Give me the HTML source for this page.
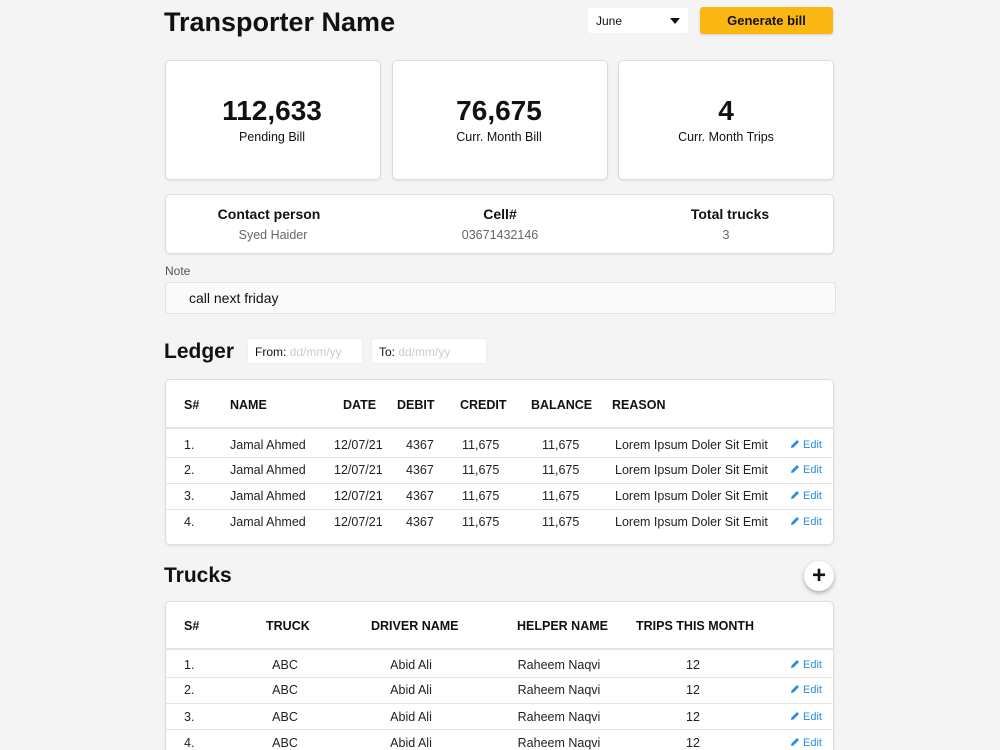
<!DOCTYPE html>
<html><head><meta charset="utf-8"><style>
*{margin:0;padding:0;box-sizing:border-box}
html{width:1000px;height:750px;overflow:hidden}
body{width:1000px;height:750px;background:#f4f4f4;font-family:"Liberation Sans",Arial,sans-serif;color:#111;position:relative;overflow:hidden}
.a{position:absolute;white-space:nowrap}
.box{position:absolute;background:#fff;border:1px solid #ddd;border-radius:5px;box-shadow:0 1px 2px rgba(0,0,0,.08)}
.c{transform:translateX(-50%)}
.h{font-size:12.5px;font-weight:bold;color:#111}
.d{font-size:12.5px;color:#222}
.line{position:absolute;left:165px;width:669px;height:1px;background:#e4e4e4}
.ed{font-size:11px;color:#2a8ee0}
.ed svg{vertical-align:-1px;margin-right:3px}
</style></head><body>
<div class="a" style="left:164px;top:7px;font-size:27px;font-weight:bold">Transporter Name</div>
<div class="a" style="left:588px;top:8px;width:100px;height:25px;background:#fff;border-radius:3px;font-size:12px;padding:6px 8px">June<span style="position:absolute;right:8px;top:10px;border-left:5px solid transparent;border-right:5px solid transparent;border-top:6px solid #111"></span></div>
<div class="a" style="left:700px;top:7px;width:133px;height:27px;background:#fbb711;border-radius:3px;font-size:13px;font-weight:bold;text-align:center;line-height:27px;box-shadow:0 1px 2px rgba(0,0,0,.15)">Generate bill</div>

<div class="box" style="left:165px;top:60px;width:216px;height:120px"></div>
<div class="box" style="left:392px;top:60px;width:216px;height:120px"></div>
<div class="box" style="left:618px;top:60px;width:216px;height:120px"></div>
<div class="a c" style="left:272px;top:95px;font-size:28px;font-weight:bold">112,633</div>
<div class="a c" style="left:272px;top:130px;font-size:12.5px">Pending Bill</div>
<div class="a c" style="left:499px;top:95px;font-size:28px;font-weight:bold">76,675</div>
<div class="a c" style="left:499px;top:130px;font-size:12.5px">Curr. Month Bill</div>
<div class="a c" style="left:726px;top:95px;font-size:28px;font-weight:bold">4</div>
<div class="a c" style="left:726px;top:130px;font-size:12.5px">Curr. Month Trips</div>

<div class="box" style="left:165px;top:194px;width:669px;height:60px"></div>
<div class="a c" style="left:269px;top:206px;font-size:14px;font-weight:bold">Contact person</div>
<div class="a c" style="left:273px;top:228px;font-size:12.5px;color:#666">Syed Haider</div>
<div class="a c" style="left:500px;top:206px;font-size:14px;font-weight:bold">Cell#</div>
<div class="a c" style="left:500px;top:228px;font-size:12.5px;color:#666">03671432146</div>
<div class="a c" style="left:730px;top:206px;font-size:14px;font-weight:bold">Total trucks</div>
<div class="a c" style="left:726px;top:228px;font-size:12.5px;color:#666">3</div>

<div class="a" style="left:165px;top:264px;font-size:12px;color:#555">Note</div>
<div class="a" style="left:165px;top:282px;width:671px;height:32px;background:#fafafa;border:1px solid #e2e2e2;border-radius:4px;font-size:14px;padding:7px 23px">call next friday</div>

<div class="a" style="left:164px;top:340px;font-size:21px;font-weight:bold">Ledger</div>
<div class="a" style="left:247px;top:338px;width:116px;height:26px;background:#fff;border:1px solid #eee;border-radius:3px;font-size:12px;padding:6px 7px">From: <span style="color:#ccc">dd/mm/yy</span></div>
<div class="a" style="left:371px;top:338px;width:116px;height:26px;background:#fff;border:1px solid #eee;border-radius:3px;font-size:12px;padding:6px 7px">To: <span style="color:#ccc">dd/mm/yy</span></div>

<div class="box" style="left:165px;top:379px;width:669px;height:166px"></div>
<div class="a h" style="left:184px;top:398px">S#</div>
<div class="a h" style="left:230px;top:398px">NAME</div>
<div class="a h" style="left:343px;top:398px">DATE</div>
<div class="a h" style="left:397px;top:398px">DEBIT</div>
<div class="a h" style="left:460px;top:398px">CREDIT</div>
<div class="a h" style="left:531px;top:398px">BALANCE</div>
<div class="a h" style="left:612px;top:398px">REASON</div>
<div class="line" style="top:427px;height:2px"></div>
<div class="line" style="top:457px"></div>
<div class="line" style="top:483px"></div>
<div class="line" style="top:509px"></div>

<div id="L"></div>

<div class="a" style="left:164px;top:564px;font-size:21px;font-weight:bold">Trucks</div>
<div class="a" style="left:804px;top:561px;width:30px;height:30px;border-radius:50%;background:#fff;box-shadow:0 2px 4px rgba(0,0,0,.3);text-align:center;line-height:29px;font-size:24px;font-weight:bold">+</div>
<div class="box" style="left:165px;top:601px;width:669px;height:160px"></div>
<div class="a h" style="left:184px;top:619px">S#</div>
<div class="a h" style="left:266px;top:619px">TRUCK</div>
<div class="a h" style="left:371px;top:619px">DRIVER NAME</div>
<div class="a h" style="left:517px;top:619px">HELPER NAME</div>
<div class="a h" style="left:636px;top:619px">TRIPS THIS MONTH</div>
<div class="line" style="top:648px;height:2px"></div>
<div class="line" style="top:677px"></div>
<div class="line" style="top:703px"></div>
<div class="line" style="top:729px"></div>
<div id="T"></div>

<script>
var pen='<svg width="10" height="10" viewBox="0 0 10 10"><path d="M1 9 L1.5 6.5 L7 1 L9 3 L3.5 8.5 Z" fill="#2a8ee0"/></svg>';
var L='',ys=[438,463,489,515];
ys.forEach(function(y,i){
L+='<div class="a d" style="left:184px;top:'+y+'px">'+(i+1)+'.</div>'+
'<div class="a d" style="left:230px;top:'+y+'px">Jamal Ahmed</div>'+
'<div class="a d" style="left:334px;top:'+y+'px">12/07/21</div>'+
'<div class="a d" style="left:406px;top:'+y+'px">4367</div>'+
'<div class="a d" style="left:462px;top:'+y+'px">11,675</div>'+
'<div class="a d" style="left:542px;top:'+y+'px">11,675</div>'+
'<div class="a d" style="left:615px;top:'+y+'px">Lorem Ipsum Doler Sit Emit</div>'+
'<div class="a ed" style="left:790px;top:'+(y+1)+'px">'+pen+'Edit</div>';});
document.getElementById('L').innerHTML=L;
var T='',yt=[658,683,710,736];
yt.forEach(function(y,i){
T+='<div class="a d" style="left:184px;top:'+y+'px">'+(i+1)+'.</div>'+
'<div class="a d c" style="left:285px;top:'+y+'px">ABC</div>'+
'<div class="a d c" style="left:411px;top:'+y+'px">Abid Ali</div>'+
'<div class="a d c" style="left:559px;top:'+y+'px">Raheem Naqvi</div>'+
'<div class="a d c" style="left:693px;top:'+y+'px">12</div>'+
'<div class="a ed" style="left:790px;top:'+(y+1)+'px">'+pen+'Edit</div>';});
document.getElementById('T').innerHTML=T;
</script>
</body></html>
